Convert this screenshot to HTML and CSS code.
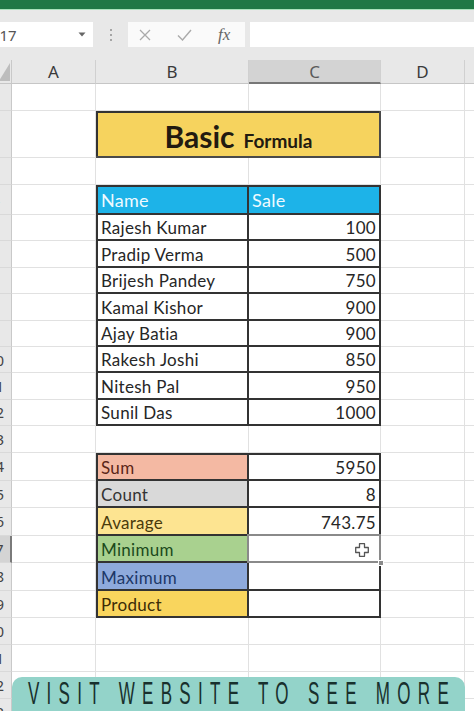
FILE: index.html
```html
<!DOCTYPE html>
<html>
<head>
<meta charset="utf-8">
<link rel="stylesheet" href="styles.css">
</head>
<body>
<div class="topbar"></div>
<div class="topline"></div>
<div class="fbar">
  <div class="namebox"><span class="ref">C17</span><svg class="caret" width="8" height="5" viewBox="0 0 8 5"><path d="M0.5 0.5 L7.5 0.5 L4 4.5 Z" fill="#666"/></svg></div>
  <div class="grip"><i></i><i></i><i></i></div>
  <div class="fbuttons">
    <svg class="ico-x" width="12" height="12" viewBox="0 0 12 12"><path d="M1 1 L11 11 M11 1 L1 11" stroke="#aaa" stroke-width="1.3" fill="none"/></svg>
    <svg class="ico-ok" width="15" height="12" viewBox="0 0 15 12"><path d="M1 6.5 L5.5 11 L14 1" stroke="#aaa" stroke-width="1.4" fill="none"/></svg>
    <span class="fx">fx</span>
  </div>
  <div class="finput"></div>
</div>

<div class="sheet">
  <div class="row hcol">
    <div class="rh corner"><svg width="11" height="18" viewBox="0 0 11 18"><path d="M11 0 L11 18 L0 18 Z" fill="#bdbdbd"/></svg></div>
    <div class="ch a">A</div>
    <div class="ch b">B</div>
    <div class="ch c selcol">C</div>
    <div class="ch d">D</div>
    <div class="ch e"></div>
  </div>

  <div class="row h27"><div class="rh">1</div><div class="cell a"></div><div class="cell b"></div><div class="cell c"></div><div class="cell d"></div><div class="cell e"></div></div>
  <div class="row h47"><div class="rh">2</div><div class="cell a"></div><div class="cell bc tb lt title"><span class="t-big">Basic</span><span class="t-small">Formula</span></div><div class="cell d"></div><div class="cell e"></div></div>
  <div class="row h27"><div class="rh">3</div><div class="cell a"></div><div class="cell b"></div><div class="cell c"></div><div class="cell d"></div><div class="cell e"></div></div>
  <div class="row h30"><div class="rh">4</div><div class="cell a"></div><div class="cell b tb lt head">Name</div><div class="cell c tb t head">Sale</div><div class="cell d"></div><div class="cell e"></div></div>

  <div class="row h26"><div class="rh">5</div><div class="cell a"></div><div class="cell b tb l">Rajesh Kumar</div><div class="cell c tb num">100</div><div class="cell d"></div><div class="cell e"></div></div>
  <div class="row h26"><div class="rh">6</div><div class="cell a"></div><div class="cell b tb l">Pradip Verma</div><div class="cell c tb num">500</div><div class="cell d"></div><div class="cell e"></div></div>
  <div class="row h26"><div class="rh">7</div><div class="cell a"></div><div class="cell b tb l">Brijesh Pandey</div><div class="cell c tb num">750</div><div class="cell d"></div><div class="cell e"></div></div>
  <div class="row h26"><div class="rh">8</div><div class="cell a"></div><div class="cell b tb l">Kamal Kishor</div><div class="cell c tb num">900</div><div class="cell d"></div><div class="cell e"></div></div>
  <div class="row h26"><div class="rh">9</div><div class="cell a"></div><div class="cell b tb l">Ajay Batia</div><div class="cell c tb num">900</div><div class="cell d"></div><div class="cell e"></div></div>
  <div class="row h26"><div class="rh">10</div><div class="cell a"></div><div class="cell b tb l">Rakesh Joshi</div><div class="cell c tb num">850</div><div class="cell d"></div><div class="cell e"></div></div>
  <div class="row h26"><div class="rh">11</div><div class="cell a"></div><div class="cell b tb l">Nitesh Pal</div><div class="cell c tb num">950</div><div class="cell d"></div><div class="cell e"></div></div>
  <div class="row h26"><div class="rh">12</div><div class="cell a"></div><div class="cell b tb l">Sunil Das</div><div class="cell c tb num">1000</div><div class="cell d"></div><div class="cell e"></div></div>

  <div class="row h27"><div class="rh">13</div><div class="cell a"></div><div class="cell b"></div><div class="cell c"></div><div class="cell d"></div><div class="cell e"></div></div>

  <div class="row h275"><div class="rh">14</div><div class="cell a"></div><div class="cell b tb lt s-sum">Sum</div><div class="cell c tb t num">5950</div><div class="cell d"></div><div class="cell e"></div></div>
  <div class="row h275"><div class="rh">15</div><div class="cell a"></div><div class="cell b tb l s-count">Count</div><div class="cell c tb num">8</div><div class="cell d"></div><div class="cell e"></div></div>
  <div class="row h275"><div class="rh">16</div><div class="cell a"></div><div class="cell b tb l s-avg">Avarage</div><div class="cell c tb num">743.75</div><div class="cell d"></div><div class="cell e"></div></div>
  <div class="row h275"><div class="rh rh-sel">17</div><div class="cell a"></div><div class="cell b tb l s-min">Minimum</div><div class="cell c tb num sel"><div class="selbox"><i class="handle"></i></div><svg class="cursor" width="14" height="14" viewBox="0 0 14 14"><path d="M4.5 0.7 H9.5 V4.5 H13.3 V9.5 H9.5 V13.3 H4.5 V9.5 H0.7 V4.5 H4.5 Z" fill="#fff" stroke="#555" stroke-width="1.3" stroke-linejoin="round"/></svg></div><div class="cell d"></div><div class="cell e"></div></div>
  <div class="row h275"><div class="rh">18</div><div class="cell a"></div><div class="cell b tb l s-max">Maximum</div><div class="cell c tb num"></div><div class="cell d"></div><div class="cell e"></div></div>
  <div class="row h275"><div class="rh">19</div><div class="cell a"></div><div class="cell b tb l s-prod">Product</div><div class="cell c tb num"></div><div class="cell d"></div><div class="cell e"></div></div>

  <div class="row h27"><div class="rh">20</div><div class="cell a"></div><div class="cell b"></div><div class="cell c"></div><div class="cell d"></div><div class="cell e"></div></div>
  <div class="row h27"><div class="rh">21</div><div class="cell a"></div><div class="cell b"></div><div class="cell c"></div><div class="cell d"></div><div class="cell e"></div></div>
  <div class="row h27"><div class="rh">22</div><div class="cell a"></div><div class="cell b"></div><div class="cell c"></div><div class="cell d"></div><div class="cell e"></div></div>
  <div class="row h27"><div class="rh">23</div><div class="cell a"></div><div class="cell b"></div><div class="cell c"></div><div class="cell d"></div><div class="cell e"></div></div>
</div>

<div class="banner"><span class="banner-text">VISIT WEBSITE TO SEE MORE</span></div>
</body>
</html>
```

FILE: styles.css
```css
* { box-sizing: border-box; }
html, body { margin: 0; padding: 0; }
body {
  width: 474px;
  height: 711px;
  overflow: hidden;
  position: relative;
  background: #fff;
  font-family: "Lato", "Liberation Sans", sans-serif;
}

.topbar { height: 9px; background: #1f7845; }
.topline { height: 1px; background: #a9e2bb; }

.fbar {
  height: 50px;
  background: #e8e8e8;
  display: flex;
  align-items: flex-start;
  padding-top: 12px;
}
.namebox {
  margin-left: -30px;
  width: 123px;
  height: 25px;
  background: #fff;
  display: flex;
  align-items: center;
  padding-left: 20px;
  padding-right: 7px;
  font-family: "Noto Sans", "Liberation Sans", sans-serif;
  font-size: 15px;
  color: #555;
}
.namebox .ref { flex: 1; }
.grip {
  width: 35px;
  height: 25px;
  display: flex;
  flex-direction: column;
  align-items: center;
  justify-content: center;
  gap: 3px;
}
.grip i { display: block; width: 2px; height: 2px; background: #a5a5a5; }
.fbuttons {
  width: 117px;
  height: 25px;
  background: #fafafa;
  display: flex;
  align-items: center;
}
.ico-x { margin-left: 11px; }
.ico-ok { margin-left: 26px; }
.fx {
  margin-left: 26px;
  font-family: "Liberation Serif", serif;
  font-style: italic;
  font-size: 17px;
  color: #666;
  line-height: 1;
}
.finput {
  margin-left: 5px;
  flex: 1;
  height: 25px;
  background: #fff;
}

.sheet { margin-left: -20px; }
.row { display: flex; }
.hcol { height: 24px; background: #e8e8e8; }
.h27 { height: 27px; }
.h47 { height: 47px; }
.h30 { height: 30px; }
.h26 { height: 26.4px; }
.h275 { height: 27.5px; }

.a { width: 84px; }
.b { width: 153px; }
.c { width: 132px; }
.d { width: 84px; }
.e { width: 80px; }
.bc { width: 285px; }

.rh {
  width: 32px;
  flex: none;
  background: #e8e8e8;
  border-right: 1px solid #c9c9c9;
  border-bottom: 1px solid #d9d9d9;
  display: flex;
  align-items: center;
  justify-content: center;
  font-family: "Noto Sans", "Liberation Sans", sans-serif;
  font-size: 15px;
  color: #444;
}
.rh-sel { background: #d4d4d4; border-right: 2px solid #7a7a7a; }
.corner {
  align-items: flex-end;
  justify-content: flex-end;
  padding: 0 1px 2px 0;
  border-bottom: 1px solid #c6c6c6;
}

.ch {
  flex: none;
  border-right: 1px solid #d0d0d0;
  border-bottom: 1px solid #c6c6c6;
  display: flex;
  align-items: center;
  justify-content: center;
  font-family: "Noto Sans", "Liberation Sans", sans-serif;
  font-size: 17px;
  color: #3a3a3a;
}
.selcol {
  background: #d3d3d3;
  border-bottom: 2px solid #777;
  color: #5a5a5a;
}

.cell {
  flex: none;
  border-right: 1px solid #e1e1e1;
  border-bottom: 1px solid #e1e1e1;
  display: flex;
  align-items: flex-end;
  padding: 0 3px 3px 3px;
  font-size: 17px;
  line-height: 1;
  letter-spacing: 0.3px;
  color: #262626;
  white-space: nowrap;
  overflow: hidden;
}
.num { justify-content: flex-end; }

.tb { border-right: 2px solid #333; border-bottom: 2px solid #333; }
.l { box-shadow: inset 2px 0 0 #333; padding-left: 5px; }
.t { box-shadow: inset 0 2px 0 #333; }
.lt { box-shadow: inset 2px 2px 0 #333; padding-left: 5px; }

.title {
  background: #f6d35e;
  justify-content: center;
  align-items: baseline;
  align-content: flex-end;
  flex-wrap: wrap;
  gap: 9px;
  padding-bottom: 5px;
  letter-spacing: 0;
  font-weight: 700;
  color: #221a10;
  border-color: #4a4a4a;
}
.t-big { font-size: 30px; }
.t-small { font-size: 19px; }

.head {
  background: #1db3e8;
  color: #effaff;
  padding-bottom: 4px;
  font-size: 18px;
}

.s-sum { background: #f4b9a3; color: #5b2618; }
.s-count { background: #d9d9d9; color: #333; }
.s-avg { background: #fde491; color: #4a3b0c; }
.s-min { background: #a9d18f; color: #1c4a1c; }
.s-max { background: #8eaadc; color: #1d3868; }
.s-prod { background: #f9d55d; color: #3d2c06; }

.sel { position: relative; overflow: visible; }
.selbox {
  position: absolute;
  left: -2px;
  top: -2px;
  right: -2px;
  bottom: -2px;
  border: 2px solid #8a8a8a;
}
.handle {
  position: absolute;
  right: -5px;
  bottom: -5px;
  width: 6px;
  height: 6px;
  background: #8a8a8a;
  border: 1px solid #fff;
}
.cursor { position: absolute; left: 106px; top: 7px; }

.banner {
  position: absolute;
  left: 12px;
  bottom: 0;
  width: 453px;
  height: 34px;
  background: #93d3c9;
  border-radius: 10px 10px 0 0;
  display: flex;
  align-items: center;
  justify-content: center;
  padding-left: 7px;
}
.banner-text {
  display: inline-block;
  font-family: "Liberation Sans", Arial, sans-serif;
  font-size: 17px;
  line-height: 17px;
  letter-spacing: 7.3px;
  color: #18302d;
  white-space: nowrap;
  transform: scaleY(1.8);
}
```
